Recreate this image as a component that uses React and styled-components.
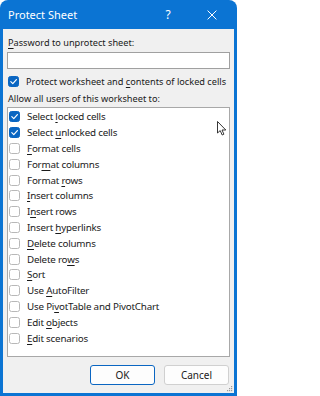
import React from 'react';
import styled, { createGlobalStyle } from 'styled-components';

const GlobalStyle = createGlobalStyle`
  html, body {
    margin: 0;
    padding: 0;
    background: #ffffff;
  }
  body {
    font-family: "Noto Sans", "Open Sans", sans-serif;
  }
`;

const permissions = [
  { pre: 'Select ', key: 'l', post: 'ocked cells', checked: true },
  { pre: 'Select ', key: 'u', post: 'nlocked cells', checked: true },
  { pre: '', key: 'F', post: 'ormat cells' },
  { pre: 'For', key: 'm', post: 'at columns' },
  { pre: 'Format ', key: 'r', post: 'ows' },
  { pre: '', key: 'I', post: 'nsert columns' },
  { pre: 'I', key: 'n', post: 'sert rows' },
  { pre: 'Insert ', key: 'h', post: 'yperlinks' },
  { pre: '', key: 'D', post: 'elete columns' },
  { pre: 'Delete ro', key: 'w', post: 's' },
  { pre: '', key: 'S', post: 'ort' },
  { pre: 'Use ', key: 'A', post: 'utoFilter' },
  { pre: 'Use Pi', key: 'v', post: 'otTable and PivotChart' },
  { pre: 'Edit ', key: 'o', post: 'bjects' },
  { pre: '', key: 'E', post: 'dit scenarios' },
];

const CheckMark = () => (
  <svg width="9" height="9" viewBox="0 0 10 10">
    <path d="M2 5.2 L4.2 7.3 L8.2 2.8" fill="none" stroke="#ffffff" strokeWidth="1.3" strokeLinecap="round" strokeLinejoin="round" />
  </svg>
);

const Pointer = () => (
  <svg width="10" height="15" viewBox="0 0 10 15">
    <path d="M0.5 0.5 L0.5 12 L3.2 9.6 L5.2 14 L6.9 13.2 L5 9 L8.8 9 Z" fill="#ffffff" stroke="#202020" strokeWidth="0.9" strokeLinejoin="round" />
  </svg>
);

const Label = ({ pre, k, post }) => (
  <span>
    {pre}
    <Key>{k}</Key>
    {post}
  </span>
);

const App = () => {
  return (
    <>
      <GlobalStyle />
      <Window>
        <TitleBar>
          <Title>Protect Sheet</Title>
          <TitleButtons>
            <TitleButton>?</TitleButton>
            <TitleButton>
              <svg width="10" height="10" viewBox="0 0 10 10">
                <path d="M0.6 0.6 L9.4 9.4 M9.4 0.6 L0.6 9.4" stroke="#ffffff" strokeWidth="1" />
              </svg>
            </TitleButton>
          </TitleButtons>
        </TitleBar>
        <Body>
          <FieldLabel>
            <Label pre="" k="P" post="assword to unprotect sheet:" />
          </FieldLabel>
          <PasswordInput type="password" />
          <OptionRow>
            <Box checked>
              <CheckMark />
            </Box>
            <Label pre="Protect worksheet and " k="c" post="ontents of locked cells" />
          </OptionRow>
          <FieldLabel>Allow all users of this worksheet to:</FieldLabel>
          <ListBox>
            {permissions.map((p) => (
              <ListItem key={p.pre + p.key + p.post}>
                <Box checked={p.checked}>{p.checked && <CheckMark />}</Box>
                <Label pre={p.pre} k={p.key} post={p.post} />
              </ListItem>
            ))}
            <Cursor>
              <Pointer />
            </Cursor>
          </ListBox>
          <Footer>
            <Button $primary>OK</Button>
            <Button>Cancel</Button>
          </Footer>
          <Grip>
            <svg width="6" height="6" viewBox="0 0 6 6">
              <rect x="4" y="0" width="1.2" height="1.2" fill="#9a9a9a" />
              <rect x="2" y="2" width="1.2" height="1.2" fill="#9a9a9a" />
              <rect x="4" y="2" width="1.2" height="1.2" fill="#9a9a9a" />
              <rect x="0" y="4" width="1.2" height="1.2" fill="#9a9a9a" />
              <rect x="2" y="4" width="1.2" height="1.2" fill="#9a9a9a" />
              <rect x="4" y="4" width="1.2" height="1.2" fill="#9a9a9a" />
            </svg>
          </Grip>
        </Body>
      </Window>
    </>
  );
};

// Styled Components

const Window = styled.div`
  width: 237px;
  height: 396px;
  box-sizing: border-box;
  display: flex;
  flex-direction: column;
  background-color: #0b74d3;
  border-radius: 8px 8px 0 0;
  padding: 0 3px 3px 3px;
`;

const TitleBar = styled.div`
  height: 29px;
  flex-shrink: 0;
  display: flex;
  align-items: center;
  justify-content: space-between;
  padding-left: 5px;
`;

const Title = styled.div`
  color: #ffffff;
  font-size: 11px;
`;

const TitleButtons = styled.div`
  display: flex;
  align-items: center;
  height: 100%;
`;

const TitleButton = styled.div`
  width: 44px;
  height: 100%;
  display: flex;
  align-items: center;
  justify-content: center;
  color: #ffffff;
  font-size: 12px;
`;

const Body = styled.div`
  flex: 1;
  position: relative;
  display: flex;
  flex-direction: column;
  background-color: #f0f0f0;
  padding: 7px 4px 0 4px;
  font-size: 9.2px;
  color: #1a1a1a;
`;

const Key = styled.u`
  text-decoration-thickness: 1px;
  text-underline-offset: 1.5px;
`;

const FieldLabel = styled.div`
  height: 14px;
  line-height: 14px;
  padding-left: 1px;
  white-space: nowrap;
`;

const PasswordInput = styled.input`
  margin-top: 2px;
  height: 17px;
  box-sizing: border-box;
  width: 223px;
  border: 1px solid #a0a0a0;
  background: #ffffff;
  outline: none;
`;

const OptionRow = styled.div`
  display: flex;
  align-items: center;
  gap: 7px;
  height: 14px;
  margin: 5px 0 4px 1px;
  white-space: nowrap;
`;

const Box = styled.div`
  width: 11px;
  height: 11px;
  box-sizing: border-box;
  flex-shrink: 0;
  border-radius: 2.5px;
  display: flex;
  align-items: center;
  justify-content: center;
  background-color: ${(p) => (p.checked ? '#0a66c2' : '#ffffff')};
  border: 1px solid ${(p) => (p.checked ? '#0a66c2' : '#b8b8b8')};
`;

const ListBox = styled.div`
  position: relative;
  margin-top: 1px;
  width: 223px;
  height: 250px;
  box-sizing: border-box;
  border: 1px solid #a8a8a8;
  background: #ffffff;
  padding: 1px 0 0 1px;
  display: flex;
  flex-direction: column;
  font-size: 9.8px;
  letter-spacing: -0.2px;
`;

const ListItem = styled.div`
  display: flex;
  align-items: center;
  gap: 7px;
  height: 15.8px;
  white-space: nowrap;
`;

const Cursor = styled.div`
  position: absolute;
  left: 209px;
  top: 13px;
  line-height: 0;
`;

const Footer = styled.div`
  display: flex;
  justify-content: flex-end;
  gap: 9px;
  margin-top: 8px;
  padding-right: 1px;
`;

const Button = styled.button`
  width: 65px;
  height: 20px;
  box-sizing: border-box;
  background: #fdfdfd;
  border: ${(p) => (p.$primary ? '1.5px solid #0a66c2' : '1px solid #d0d0d0')};
  border-radius: 3px;
  font-family: "Noto Sans", "Open Sans", sans-serif;
  font-size: 10px;
  color: #1a1a1a;
  padding: 0;
`;

const Grip = styled.div`
  position: absolute;
  right: 1px;
  bottom: 1px;
  line-height: 0;
`;

export default App;
